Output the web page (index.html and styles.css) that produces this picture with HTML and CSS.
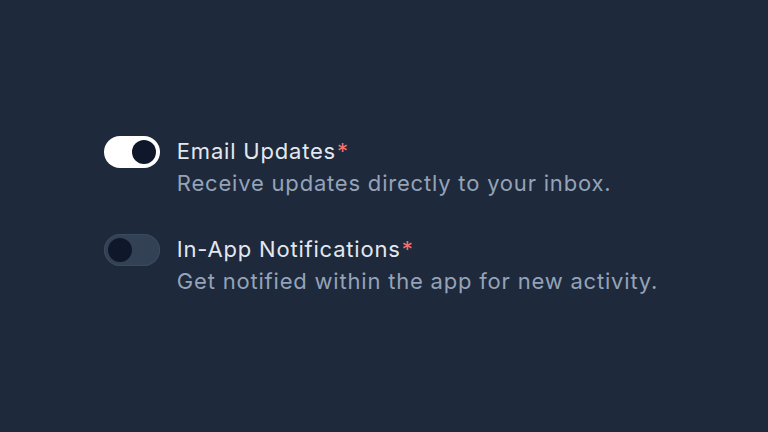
FILE: index.html
```html
<!DOCTYPE html>
<html>
<head>
<meta charset="utf-8">
<link rel="stylesheet" href="styles.css">
</head>
<body>
<main class="page">
  <div class="list">
    <div class="item">
      <button class="switch on" type="button" aria-pressed="true"><span class="knob"></span></button>
      <div class="text">
        <div class="title">Email Updates<span class="req">*</span></div>
        <div class="desc">Receive updates directly to your inbox.</div>
      </div>
    </div>
    <div class="item">
      <button class="switch off" type="button" aria-pressed="false"><span class="knob"></span></button>
      <div class="text">
        <div class="title">In-App Notifications<span class="req">*</span></div>
        <div class="desc">Get notified within the app for new activity.</div>
      </div>
    </div>
  </div>
</main>
</body>
</html>
```
FILE: styles.css
```css
html, body {
  margin: 0;
  padding: 0;
  background: #1e293b;
}
.page {
  width: 768px;
  height: 432px;
  display: flex;
  align-items: center;
  justify-content: center;
  font-family: Inter, "Noto Sans", sans-serif;
}
.list {
  display: flex;
  flex-direction: column;
  gap: 37px;
  margin-left: -6px;
  margin-top: -1px;
}
.item {
  display: flex;
  align-items: flex-start;
  gap: 17px;
}
.switch {
  flex: none;
  width: 56px;
  height: 32px;
  border: none;
  border-radius: 16px;
  padding: 4px;
  margin: 0;
  display: flex;
  align-items: center;
}
.switch.on {
  background: #ffffff;
  justify-content: flex-end;
}
.switch.off {
  background: #334155;
  justify-content: flex-start;
  box-shadow: inset 0 0 0 1px #3a4a61;
}
.knob {
  width: 24px;
  height: 24px;
  border-radius: 50%;
  background: #0f172a;
}
.text {
  display: flex;
  flex-direction: column;
  margin-top: 1px;
}
.title {
  font-size: 22px;
  line-height: 28px;
  letter-spacing: 0.8px;
  color: #e2e8f0;
}
.req {
  color: #f87171;
  margin-left: 1px;
}
.desc {
  font-size: 22px;
  line-height: 28px;
  letter-spacing: 0.8px;
  margin-top: 4px;
  color: #94a3b8;
}
```
